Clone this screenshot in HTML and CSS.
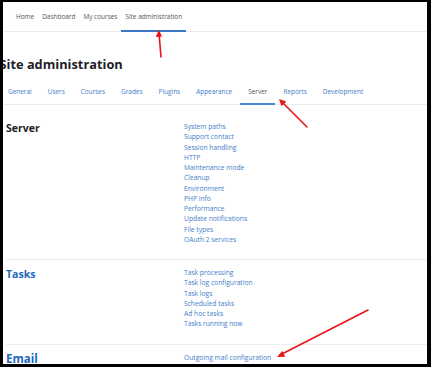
FILE: index.html
```html
<!DOCTYPE html>
<html>
<head>
<meta charset="utf-8">
<link rel="stylesheet" href="styles.css">
</head>
<body>
<div class="frame">
  <nav class="topnav">
    <a class="topnav-item">Home</a>
    <a class="topnav-item">Dashboard</a>
    <a class="topnav-item">My courses</a>
    <a class="topnav-item active">Site administration</a>
  </nav>
  <h1 class="title">Site administration</h1>
  <nav class="tabs">
    <a class="tab">General</a>
    <a class="tab">Users</a>
    <a class="tab">Courses</a>
    <a class="tab">Grades</a>
    <a class="tab">Plugins</a>
    <a class="tab">Appearance</a>
    <a class="tab active">Server</a>
    <a class="tab">Reports</a>
    <a class="tab">Development</a>
  </nav>
  <section class="group first">
    <h2 class="group-title dark">Server</h2>
    <ul class="links">
      <li>System paths</li>
      <li>Support contact</li>
      <li>Session handling</li>
      <li>HTTP</li>
      <li>Maintenance mode</li>
      <li>Cleanup</li>
      <li>Environment</li>
      <li>PHP info</li>
      <li>Performance</li>
      <li>Update notifications</li>
      <li>File types</li>
      <li>OAuth 2 services</li>
    </ul>
  </section>
  <section class="group">
    <h2 class="group-title">Tasks</h2>
    <ul class="links">
      <li>Task processing</li>
      <li>Task log configuration</li>
      <li>Task logs</li>
      <li>Scheduled tasks</li>
      <li>Ad hoc tasks</li>
      <li>Tasks running now</li>
    </ul>
  </section>
  <section class="group">
    <h2 class="group-title big">Email</h2>
    <ul class="links">
      <li>Outgoing mail configuration</li>
    </ul>
  </section>
  <svg class="arrows" width="431" height="367" viewBox="0 0 431 367">
    <g stroke="#e8141a" stroke-width="1.6" fill="none" stroke-linecap="round">
      <line x1="161" y1="57" x2="159" y2="33"/>
      <line x1="307" y1="127" x2="281" y2="101"/>
      <line x1="368" y1="310" x2="280" y2="355"/>
    </g>
    <g fill="#e8141a">
      <polygon points="158.8,30 155.8,37 162.2,36.6"/>
      <polygon points="279,99 281.5,106.3 286.3,101.6"/>
      <polygon points="277,357 282.3,351 285.3,356.8"/>
    </g>
  </svg>
</div>
</body>
</html>
```
FILE: styles.css
```css
html, body {
  margin: 0;
  padding: 0;
  background: #fff;
}
.frame {
  position: relative;
  width: 431px;
  height: 367px;
  box-sizing: border-box;
  border-style: solid;
  border-color: #000;
  border-width: 2px 4px 3px 3px;
  overflow: hidden;
  font-family: "Open Sans", "Liberation Sans", sans-serif;
  background: #fff;
}
.topnav {
  display: flex;
  height: 30px;
  padding-left: 9px;
  border-bottom: 1px solid #ececec;
  box-sizing: border-box;
}
.topnav-item {
  display: flex;
  align-items: center;
  padding: 0 4px;
  font-size: 6.45px;
  color: #555;
  border-bottom: 2px solid transparent;
  margin-bottom: -1px;
}
.topnav-item.active {
  border-bottom-color: #3b78c4;
}
.title {
  margin: 23px 0 0 -3.5px;
  font-size: 12.8px;
  font-weight: 700;
  line-height: 18px;
  color: #1d2125;
}
.tabs {
  display: flex;
  margin: 7px 0 0 -3px;
  height: 25px;
  border-bottom: 1px solid #ececec;
  box-sizing: border-box;
}
.tab {
  display: flex;
  align-items: center;
  padding: 0 8px;
  font-size: 6.45px;
  color: #3f80c9;
  border-bottom: 2px solid transparent;
  margin-bottom: -1px;
}
.tab.active {
  color: #555;
  border-bottom-color: #4585cd;
}
.group {
  display: grid;
  grid-template-columns: 178px 1fr;
  margin-left: 3px;
  padding: 8px 0 14px 0;
  border-top: 1px solid #eeeeee;
}
.group.first {
  border-top: none;
  padding-top: 17px;
}
.group-title {
  margin: 0;
  font-size: 10.5px;
  line-height: 12px;
  font-weight: 700;
  color: #1c67bd;
}
.group-title.dark {
  color: #1d2125;
}
.group-title.big {
  font-size: 11.5px;
}
.links {
  list-style: none;
  margin: 0;
  padding: 0;
  font-size: 6.7px;
  line-height: 10.25px;
  color: #3f80c9;
}
.arrows {
  position: absolute;
  left: -3px;
  top: -2px;
  pointer-events: none;
}
```
